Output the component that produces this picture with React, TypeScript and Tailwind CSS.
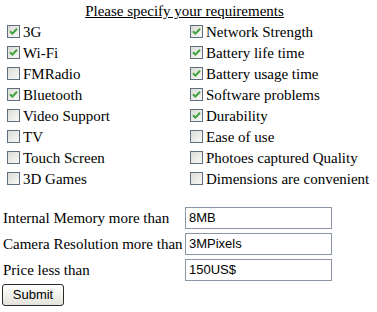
import type React from "react";

const left = [
  { label: "3G", on: true },
  { label: "Wi-Fi", on: true },
  { label: "FMRadio", on: false },
  { label: "Bluetooth", on: true },
  { label: "Video Support", on: false },
  { label: "TV", on: false },
  { label: "Touch Screen", on: false },
  { label: "3D Games", on: false },
];

const right = [
  { label: "Network Strength", on: true },
  { label: "Battery life time", on: true },
  { label: "Battery usage time", on: true },
  { label: "Software problems", on: true },
  { label: "Durability", on: true },
  { label: "Ease of use", on: false },
  { label: "Photoes captured Quality", on: false },
  { label: "Dimensions are convenient", on: false },
];

const fields = [
  { label: "Internal Memory more than", value: "8MB" },
  { label: "Camera Resolution more than", value: "3MPixels" },
  { label: "Price less than", value: "150US$" },
];

const Box: React.FC<{ on: boolean }> = ({ on }) => (
  <span className="flex h-[13px] w-[13px] shrink-0 items-center justify-center border border-[#5f6f7f] bg-gradient-to-br from-[#dcdcd6] to-[#f8f8f6]">
    {on && (
      <svg width="9" height="9" viewBox="0 0 9 9">
        <path d="M1 4.2 L3.4 6.6 L8 1.8" stroke="#3ea23e" strokeWidth="2" fill="none" />
      </svg>
    )}
  </span>
);

const Check: React.FC<{ label: string; on: boolean }> = ({ label, on }) => (
  <label className="flex h-[21px] items-center gap-[3px]">
    <Box on={on} />
    <span className="whitespace-nowrap">{label}</span>
  </label>
);

export default function App() {
  return (
    <div className="h-[312px] w-[377px] bg-white text-[15px] leading-[18px] text-black" style={{ fontFamily: '"Liberation Serif", "Times New Roman", serif' }}>
      <div className="pt-[2px] pr-[8px] text-center">
        <span className="underline">Please specify your requirements</span>
      </div>
      <div className="mt-[1px] grid grid-cols-[183px_auto] pl-[7px]">
        <div className="flex flex-col">
          {left.map((c) => (
            <Check key={c.label} {...c} />
          ))}
        </div>
        <div className="flex flex-col">
          {right.map((c) => (
            <Check key={c.label} {...c} />
          ))}
        </div>
      </div>
      <div className="mt-[18px] flex flex-col gap-[4px] pl-[3px]">
        {fields.map((f) => (
          <div key={f.label} className="flex items-center">
            <span className="w-[182px] whitespace-nowrap">{f.label}</span>
            <div className="flex h-[22px] w-[147px] items-center border border-[#8a96a2] bg-white pl-[3px] text-[13px]" style={{ fontFamily: '"Liberation Sans", Arial, sans-serif' }}>
              {f.value}
            </div>
          </div>
        ))}
      </div>
      <div className="mt-[3px] pl-[2px]">
        <button className="h-[22px] w-[62px] rounded-[3px] border border-[#2b2b2b] bg-gradient-to-b from-[#ffffff] to-[#e3e3db] text-[13px]" style={{ fontFamily: '"Liberation Sans", Arial, sans-serif' }}>
          Submit
        </button>
      </div>
    </div>
  );
}
